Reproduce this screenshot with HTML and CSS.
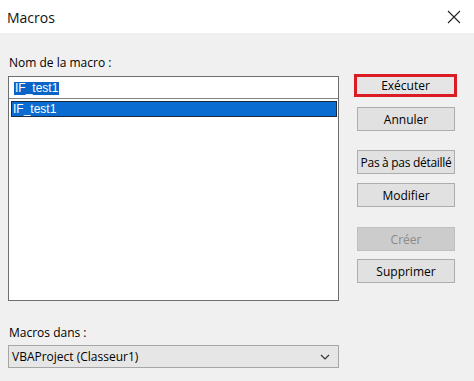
FILE: index.html
```html
<!DOCTYPE html>
<html lang="fr">
<head>
<meta charset="utf-8">
<title>Macros</title>
<link rel="stylesheet" href="styles.css">
</head>
<body>
<div class="dialog">
  <header class="titlebar">
    <span class="title">Macros</span>
    <svg class="close" width="14" height="14" viewBox="0 0 14 14"><path d="M1 1 L13 13 M13 1 L1 13" stroke="#222" stroke-width="1.1" fill="none"/></svg>
  </header>
  <main class="content">
    <section class="left">
      <div class="label first">Nom de la macro :</div>
      <div class="listbox">
        <div class="name-input"><span class="sel">IF_test1</span></div>
        <div class="list">
          <div class="item selected">IF_test1</div>
        </div>
      </div>
      <div class="label second">Macros dans :</div>
      <div class="select">
        <span>VBAProject (Classeur1)</span>
        <svg class="chev" width="10" height="6" viewBox="0 0 10 6"><path d="M1 1 L5 5 L9 1" stroke="#333" stroke-width="1.2" fill="none"/></svg>
      </div>
    </section>
    <section class="right">
      <div class="btn run">Exécuter</div>
      <div class="btn g10">Annuler</div>
      <div class="btn g19">Pas à pas détaillé</div>
      <div class="btn g9">Modifier</div>
      <div class="btn g20 disabled">Créer</div>
      <div class="btn g8">Supprimer</div>
    </section>
  </main>
</div>
</body>
</html>
```

FILE: styles.css
```css
html, body {
  margin: 0;
  padding: 0;
}
body {
  width: 474px;
  height: 381px;
  background: #f0f0f0;
  font-family: "Open Sans", "Noto Sans", sans-serif;
  font-size: 12px;
  color: #000;
  overflow: hidden;
}
.dialog {
  width: 474px;
  height: 381px;
}
.titlebar {
  height: 33px;
  background: #fff;
  display: flex;
  align-items: center;
  justify-content: space-between;
  padding: 0 13px 0 7px;
  box-sizing: border-box;
}
.title {
  font-size: 14px;
  color: #111;
  margin-top: 1px;
}
.close {
  display: block;
}
.content {
  display: flex;
  padding-left: 8px;
}
.left {
  width: 331px;
  display: flex;
  flex-direction: column;
}
.label {
  height: 16px;
  line-height: 16px;
  padding-left: 1px;
}
.label.first {
  margin-top: 22px;
  margin-bottom: 5px;
}
.label.second {
  margin-top: 24px;
  margin-bottom: 4px;
}
.listbox {
  height: 225px;
  border: 1px solid #6e6e6e;
  box-sizing: border-box;
  background: #fff;
  display: flex;
  flex-direction: column;
}
.name-input {
  height: 22px;
  border-bottom: 1px solid #828282;
  box-sizing: border-box;
  padding: 5px 0 0 5px;
  font-family: "Liberation Sans", Arial, sans-serif;
  font-size: 12px;
  line-height: 12px;
}
.sel {
  background: #0a64c8;
  color: #fff;
  padding: 0 1px;
  display: inline-block;
  line-height: 13px;
}
.list {
  flex: 1;
  padding: 2px 1px 0 2px;
}
.item {
  height: 16px;
  line-height: 15px;
  font-family: "Liberation Sans", Arial, sans-serif;
  font-size: 12px;
  padding-left: 1px;
  box-sizing: border-box;
}
.item.selected {
  background: #0a6cd0;
  color: #fff;
  border: 1px solid #1a2a44;
}
.select {
  height: 23px;
  border: 1px solid #a6a6a6;
  background: #e6e6e6;
  box-sizing: border-box;
  display: flex;
  align-items: center;
  justify-content: space-between;
  padding: 0 8px 0 3px;
}
.chev {
  display: block;
}
.right {
  margin-left: 18px;
  padding-top: 41px;
  display: flex;
  flex-direction: column;
}
.btn {
  width: 98px;
  height: 24px;
  box-sizing: border-box;
  border: 1px solid #adadad;
  background: #e1e1e1;
  display: flex;
  align-items: center;
  justify-content: center;
  white-space: nowrap;
}
.btn.run {
  width: 103px;
  height: 23px;
  margin-left: -3px;
  border: 3px solid #dc1c24;
  background: #e5e5e5;
}
.g10 { margin-top: 10px; }
.g19 { margin-top: 19px; letter-spacing: -0.3px; }
.g9 { margin-top: 9px; }
.g20 { margin-top: 20px; }
.g8 { margin-top: 8px; }
.btn.disabled {
  background: #cccccc;
  border-color: #bfbfbf;
  color: #8a8a8a;
}
```
